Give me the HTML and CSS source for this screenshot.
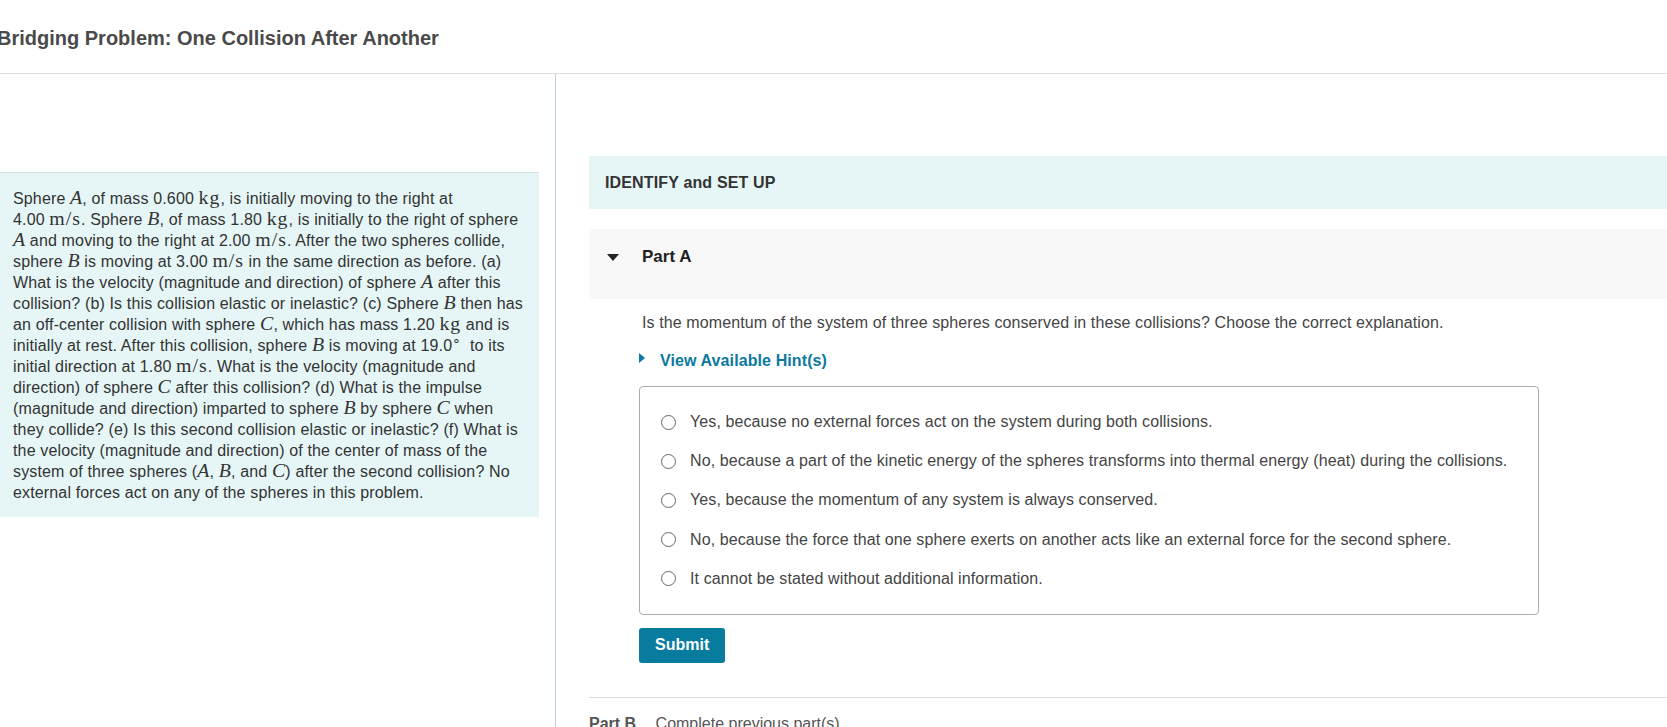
FILE: index.html
```html
<!DOCTYPE html>
<html lang="en">
<head>
  <meta charset="UTF-8">
  <meta name="viewport" content="width=device-width, initial-scale=1.0">
  <title>Bridging Problem: One Collision After Another</title>
  <link rel="stylesheet" href="styles.css">
</head>
<body>

<header class="title-bar">
  <h1>Bridging Problem: One Collision After Another</h1>
</header>

<div class="layout">
  <aside class="problem-col">
    <div class="problem-text">
      Sphere <i class="mv">A</i>, of mass 0.600 <span class="mu">kg</span>, is initially moving to the right at<br>
      4.00 <span class="mu">m/s</span>. Sphere <i class="mv">B</i>, of mass 1.80 <span class="mu">kg</span>, is initially to the right of sphere<br>
      <i class="mv">A</i> and moving to the right at 2.00 <span class="mu">m/s</span>. After the two spheres collide,<br>
      sphere <i class="mv">B</i> is moving at 3.00 <span class="mu">m/s</span> in the same direction as before. (a)<br>
      What is the velocity (magnitude and direction) of sphere <i class="mv">A</i> after this<br>
      collision? (b) Is this collision elastic or inelastic? (c) Sphere <i class="mv">B</i> then has<br>
      an off-center collision with sphere <i class="mv">C</i>, which has mass 1.20 <span class="mu">kg</span> and is<br>
      initially at rest. After this collision, sphere <i class="mv">B</i> is moving at 19.0<sup class="deg">&#8728;</sup> to its<br>
      initial direction at 1.80 <span class="mu">m/s</span>. What is the velocity (magnitude and<br>
      direction) of sphere <i class="mv">C</i> after this collision? (d) What is the impulse<br>
      (magnitude and direction) imparted to sphere <i class="mv">B</i> by sphere <i class="mv">C</i> when<br>
      they collide? (e) Is this second collision elastic or inelastic? (f) What is<br>
      the velocity (magnitude and direction) of the center of mass of the<br>
      system of three spheres (<i class="mv">A</i>, <i class="mv">B</i>, and <i class="mv">C</i>) after the second collision? No<br>
      external forces act on any of the spheres in this problem.
    </div>
  </aside>

  <section class="parts-col">
    <div class="section-head">IDENTIFY and SET UP</div>

    <div class="part-head">
      <span class="caret-down"></span>
      <span class="part-title">Part A</span>
    </div>

    <div class="part-body">
      <p class="question">Is the momentum of the system of three spheres conserved in these collisions? Choose the correct explanation.</p>

      <div class="hint">
        <span class="caret-right"></span>
        <span class="hint-link">View Available Hint(s)</span>
      </div>

      <div class="choices">
        <label class="choice"><span class="radio"></span>Yes, because no external forces act on the system during both collisions.</label>
        <label class="choice"><span class="radio"></span>No, because a part of the kinetic energy of the spheres transforms into thermal energy (heat) during the collisions.</label>
        <label class="choice"><span class="radio"></span>Yes, because the momentum of any system is always conserved.</label>
        <label class="choice"><span class="radio"></span>No, because the force that one sphere exerts on another acts like an external force for the second sphere.</label>
        <label class="choice"><span class="radio"></span>It cannot be stated without additional information.</label>
      </div>

      <button class="submit">Submit</button>
    </div>

    <div class="part-next">
      <strong>Part B</strong>
      <span>Complete previous part(s)</span>
    </div>
  </section>
</div>

</body>
</html>
```

FILE: styles.css
```css
html, body {
  height: 100%;
}
body {
  margin: 0;
  font-family: "Liberation Sans", Arial, sans-serif;
  font-size: 16px;
  color: #333;
  background: #fff;
  overflow: hidden;
}
.title-bar {
  height: 73px;
  border-bottom: 1px solid #dddddd;
}
.title-bar h1 {
  margin: 0 0 0 -3px;
  padding-top: 26px;
  font-size: 20px;
  line-height: 24px;
  font-weight: bold;
  color: #4a4a4a;
}
.layout {
  display: flex;
  height: calc(100% - 74px);
}
.problem-col {
  width: 555px;
  flex-shrink: 0;
  padding-top: 98px;
}
.problem-text {
  width: 512px;
  margin-right: 16px;
  padding: 15px 14px 14px 13px;
  background: #e6f6f7;
  border-top: 1px solid #d6e0e3;
  line-height: 21px;
  color: #333;
  white-space: nowrap;
  letter-spacing: 0.15px;
}
.mv,
.mu {
  font-family: "Liberation Serif", "Times New Roman", serif;
  font-size: 1.24em;
  line-height: 16px;
}
.mu {
  letter-spacing: 0.05em;
}
.deg {
  font-family: "Liberation Serif", serif;
  font-size: 0.85em;
  line-height: 0;
  margin-right: 4px;
}
.parts-col {
  flex: 1;
  border-left: 1px solid #b9cfe6;
  padding-top: 82px;
  padding-left: 33px;
}
.section-head {
  height: 53px;
  display: flex;
  align-items: center;
  padding-left: 16px;
  background: #e6f6f7;
  font-size: 16px;
  font-weight: bold;
  color: #333;
  letter-spacing: 0.15px;
}
.part-head {
  margin-top: 20px;
  height: 70px;
  box-sizing: border-box;
  padding: 18px 0 0 18px;
  background: #f8f8f8;
  display: flex;
  align-items: flex-start;
}
.caret-down {
  width: 0;
  height: 0;
  margin-top: 7px;
  border-left: 6px solid transparent;
  border-right: 6px solid transparent;
  border-top: 7px solid #222;
}
.part-title {
  margin-left: 23px;
  font-size: 17px;
  line-height: 20px;
  font-weight: bold;
  color: #222;
}
.part-body {
  padding-left: 50px;
}
.question {
  margin: 14px 0 0 3px;
  line-height: 20px;
  color: #444;
  letter-spacing: 0.1px;
}
.hint {
  margin-top: 18px;
  display: flex;
  align-items: center;
  height: 20px;
}
.caret-right {
  width: 0;
  height: 0;
  margin-top: -6px;
  border-top: 5px solid transparent;
  border-bottom: 5px solid transparent;
  border-left: 6px solid #0b7aa0;
}
.hint-link {
  margin-left: 15px;
  font-weight: bold;
  color: #0b7aa0;
  letter-spacing: 0.1px;
}
.choices {
  margin-top: 15px;
  width: 898px;
  padding: 15.5px 0;
  border: 1px solid #aaaaaa;
  border-radius: 4px;
}
.choice {
  display: flex;
  align-items: center;
  padding: 9.6px 0 9.6px 21px;
  line-height: 20px;
  color: #444;
  letter-spacing: 0.1px;
}
.radio {
  width: 13px;
  height: 13px;
  margin-right: 14px;
  border: 1px solid #666;
  border-radius: 50%;
  flex-shrink: 0;
}
.submit {
  margin-top: 13px;
  height: 35px;
  padding: 0 16px;
  border: none;
  border-radius: 3px;
  background: #077c9e;
  color: #fff;
  font-family: "Liberation Sans", Arial, sans-serif;
  font-size: 16px;
  font-weight: bold;
}
.part-next {
  margin-top: 34px;
  padding-top: 17px;
  border-top: 1px solid #dddddd;
  color: #555;
}
.part-next strong {
  margin-right: 15px;
}
```
